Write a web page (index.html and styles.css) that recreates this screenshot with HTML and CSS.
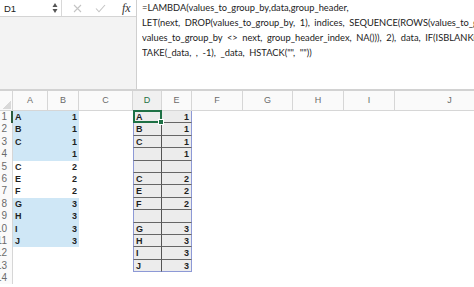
FILE: index.html
```html
<!DOCTYPE html>
<html lang="en">
<head>
  <meta charset="UTF-8" />
  <meta name="viewport" content="width=device-width, initial-scale=1.0" />
  <title>Group By Sheet</title>
  <link rel="stylesheet" href="styles.css">
</head>
<body>
  <div class="formula-bar">
    <div class="left-pane">
      <div class="name-row">
        <div class="name-box">
          <span class="cell-ref">D1</span>
          <svg class="stepper" width="6" height="12" viewBox="0 0 6 12">
            <path d="M3 1 L5.5 5 L0.5 5 Z" fill="#555" />
            <path d="M3 11 L5.5 7 L0.5 7 Z" fill="#555" />
          </svg>
        </div>
        <div class="fx-buttons">
          <svg class="icon" width="9" height="9" viewBox="0 0 9 9">
            <path d="M1 1 L8 8 M8 1 L1 8" stroke="#c4c4c4" stroke-width="1.1" fill="none" />
          </svg>
          <svg class="icon" width="11" height="9" viewBox="0 0 11 9">
            <path d="M1 4.5 L4 7.8 L10 1" stroke="#c4c4c4" stroke-width="1.1" fill="none" />
          </svg>
          <span class="fx">fx</span>
        </div>
      </div>
    </div>
    <div class="formula-text">
      <div class="line">=LAMBDA(values_to_group_by,data,group_header,</div>
      <div class="line">LET(next, DROP(values_to_group_by, 1), indices, SEQUENCE(ROWS(values_to_group_by)), group_header_index, FILTER(indices,</div>
      <div class="line">values_to_group_by &lt;&gt; next, group_header_index, NA())), 2), data, IF(ISBLANK(data), "", data),</div>
      <div class="line">TAKE(_data, , -1), _data, HSTACK("", ""))</div>
    </div>
  </div>

  <div class="sheet-view">
    <div class="sheet" id="sheet"></div>
  </div>

  <script>
    const columns = ['A', 'B', 'C', 'D', 'E', 'F', 'G', 'H', 'I', 'J'];
    const colA = ['A', 'B', 'C', '', 'C', 'E', 'F', 'G', 'H', 'I', 'J', '', '', ''];
    const colB = [1, 1, 1, 1, 2, 2, 2, 3, 3, 3, 3, '', '', ''];
    const colD = ['A', 'B', 'C', '', '', 'C', 'E', 'F', '', 'G', 'H', 'I', 'J', ''];
    const colE = [1, 1, 1, 1, '', 2, 2, 2, '', 3, 3, 3, 3, ''];
    const highlighted = [0, 1, 2, 3, 7, 8, 9, 10];
    const spillRows = 13;

    function addCell(parent, className, text) {
      const cell = document.createElement('div');
      cell.className = 'cell ' + className;
      cell.textContent = text;
      parent.appendChild(cell);
      return cell;
    }

    function renderSheet() {
      const sheet = document.getElementById('sheet');
      addCell(sheet, 'corner', '');
      columns.forEach(col => {
        addCell(sheet, 'col-head' + (col === 'D' ? ' active' : ''), col);
      });

      for (let r = 0; r < 14; r++) {
        addCell(sheet, 'row-head' + (r === 0 ? ' active' : ''), r + 1);

        const hl = highlighted.includes(r) ? ' hl' : '';
        addCell(sheet, 'text' + hl, colA[r]);
        addCell(sheet, 'num' + hl, colB[r]);
        addCell(sheet, '', '');

        if (r < spillRows) {
          const last = r === spillRows - 1 ? ' last' : '';
          addCell(sheet, 'text spill spill-d' + last + (r === 0 ? ' selected' : ''), colD[r]);
          addCell(sheet, 'num spill spill-e' + last, colE[r]);
        } else {
          addCell(sheet, '', '');
          addCell(sheet, '', '');
        }

        for (let c = 0; c < 5; c++) addCell(sheet, '', '');
      }
    }

    renderSheet();
  </script>
</body>
</html>
```

FILE: styles.css
```css
:root {
  --grid-line: #d6d6d6;
  --header-text: #6a6a6a;
  --cell-text: #1f1f1f;
  --highlight: #cfe7f6;
  --spill-bg: #ececec;
  --spill-line: #666;
  --spill-edge: #8d99d6;
  --active: #1e7145;
}

body {
  margin: 0;
  width: 474px;
  height: 287px;
  overflow: hidden;
  background: #fff;
  font-family: 'Liberation Sans', Arial, sans-serif;
  color: var(--cell-text);
}

.formula-bar {
  display: flex;
  height: 89px;
  border-bottom: 2px solid #d2d2d2;
}

.left-pane {
  width: 136px;
  flex-shrink: 0;
  background: #f3f3f3;
  border-right: 1px solid #cfcfcf;
}

.name-row {
  display: flex;
  height: 16px;
  background: #fff;
  border-bottom: 1px solid #d4d4d4;
}

.name-box {
  display: flex;
  align-items: center;
  justify-content: space-between;
  width: 62px;
  padding: 0 3px 0 4px;
  box-sizing: border-box;
  border-right: 1px solid #d8d8d8;
}

.cell-ref {
  font-size: 9.5px;
  color: #222;
}

.fx-buttons {
  display: flex;
  align-items: center;
  flex: 1;
  padding-left: 11px;
  gap: 13px;
}

.fx {
  margin-left: 3px;
  font-family: 'Liberation Serif', serif;
  font-style: italic;
  font-size: 12px;
  color: #333;
}

.formula-text {
  flex: 1;
  min-width: 0;
  padding-left: 5px;
  font-family: Lato, 'Liberation Sans', sans-serif;
  font-size: 9.3px;
  word-spacing: 2.2px;
  line-height: 15px;
  color: #222;
}

.line {
  white-space: nowrap;
  overflow: hidden;
}

.sheet-view {
  width: 474px;
  overflow: hidden;
}

.sheet {
  display: grid;
  grid-template-columns: 13px 35px 31px 54px 29px 30px 51px 50px 51px 51px 110px;
  grid-template-rows: 20px repeat(14, 12.4px);
  width: 505px;
}

.cell {
  box-sizing: border-box;
  overflow: hidden;
  white-space: nowrap;
  font-size: 9px;
  font-weight: bold;
  line-height: 12.4px;
  padding: 0 2px;
}

.text { text-align: left; }
.num { text-align: right; }

.corner {
  position: relative;
  background: #fafafa;
  border-right: 1px solid var(--grid-line);
  border-bottom: 1px solid var(--grid-line);
}

.corner::after {
  content: '';
  position: absolute;
  right: 1px;
  bottom: 1px;
  width: 8px;
  height: 8px;
  background: linear-gradient(to top left, #d9d9d9 50%, transparent 50%);
}

.col-head {
  background: #fafafa;
  border-right: 1px solid var(--grid-line);
  border-bottom: 1px solid var(--grid-line);
  color: var(--header-text);
  font-weight: normal;
  text-align: center;
  line-height: 19px;
}

.col-head.active {
  color: var(--active);
  background: #f0f0f0;
}

.row-head {
  background: #fafafa;
  border-right: 1px solid var(--grid-line);
  color: var(--header-text);
  font-weight: normal;
  font-size: 10px;
  text-align: right;
  padding: 0 5px 0 0;
  direction: rtl;
}

.row-head.active {
  border-right: 2px solid #2a5b3c;
  padding-right: 4px;
}

.hl {
  background: var(--highlight);
}

.spill {
  background: var(--spill-bg);
  border-bottom: 1px solid var(--spill-line);
}

.spill-d {
  border-left: 1px solid var(--spill-edge);
  border-right: 1px solid #555;
}

.spill-e {
  border-right: 1px solid var(--spill-edge);
}

.spill.last {
  border-bottom-color: var(--spill-edge);
}

.selected {
  position: relative;
  overflow: visible;
}

.selected::after {
  content: '';
  position: absolute;
  left: -1px;
  top: -1px;
  right: -1px;
  bottom: -1px;
  border: 2px solid var(--active);
}

.selected::before {
  content: '';
  position: absolute;
  right: -3px;
  bottom: -3px;
  width: 4px;
  height: 4px;
  background: var(--active);
  border: 1px solid #fff;
  z-index: 1;
}
```
